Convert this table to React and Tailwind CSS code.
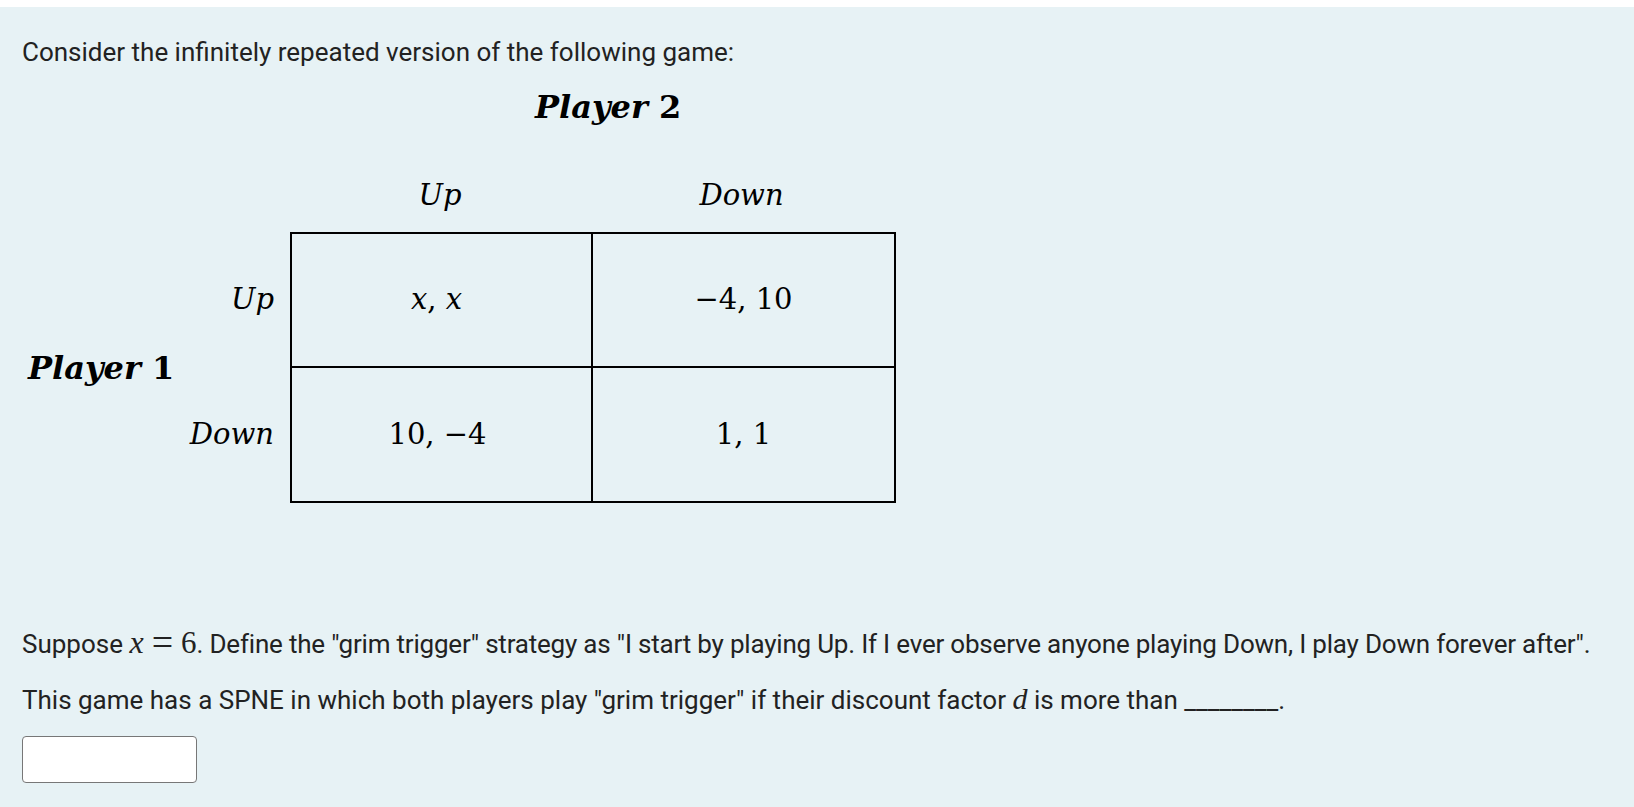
export default function App() {
  const serif = { fontFamily: '"DejaVu Serif", "Liberation Serif", serif' };
  const mj = { fontFamily: '"Liberation Serif", "DejaVu Serif", serif' };
  return (
    <div className="w-[1634px] h-[807px] bg-white pt-[7px]" style={{ fontFamily: 'Roboto, "Liberation Sans", sans-serif' }}>
      <div className="h-[800px] bg-[#e7f2f5] pl-[22px] text-[#222] text-[26px]">
        <div className="pt-[30px] h-[60px] leading-[30px]">Consider the infinitely repeated version of the following game:</div>

        <div className="mt-[20px] h-[40px] leading-[40px] pl-[513px] text-black text-[32px] font-bold italic" style={serif}>
          Player <span className="not-italic">2</span>
        </div>

        <div className="mt-[48px] h-[40px] leading-[40px] flex text-black text-[29px] italic" style={serif}>
          <div className="w-[268px]" />
          <div className="w-[300px] text-center">Up</div>
          <div className="w-[303px] text-center">Down</div>
        </div>

        <div className="mt-[17px] flex items-center text-black" style={serif}>
          <div className="w-[158px] pl-[6px] text-[32px] font-bold italic leading-[40px] whitespace-nowrap">
            Player <span className="not-italic">1</span>
          </div>
          <div className="w-[110px] pr-[16px] flex flex-col text-right text-[29px] italic">
            <div className="h-[135px] flex items-center justify-end">Up</div>
            <div className="h-[136px] flex items-center justify-end">Down</div>
          </div>
          <div className="w-[606px] h-[271px] border-2 border-black grid grid-cols-2 grid-rows-2 text-[29px]">
            <div className="border-r-2 border-b-2 border-black flex items-center justify-center pr-[10px]">
              <span className="italic">x</span>,&nbsp;<span className="italic">x</span>
            </div>
            <div className="border-b-2 border-black flex items-center justify-center">−4,&nbsp;10</div>
            <div className="border-r-2 border-black flex items-center justify-center pr-[8px]">10,&nbsp;−4</div>
            <div className="flex items-center justify-center">1,&nbsp;1</div>
          </div>
        </div>

        <div className="mt-[124px] h-[30px] leading-[30px] whitespace-nowrap">
          Suppose <span className="italic text-[32px]" style={mj}>x</span>
          <span className="inline-block text-[38px] leading-[0px] mx-[8px] align-[-2px]" style={mj}>=</span>
          <span className="text-[31px]" style={mj}>6</span>
          <span className="tracking-[-0.2px]">. Define the "grim trigger" strategy as "I start by playing Up. If I ever observe anyone playing Down, I play Down forever after".</span>
        </div>

        <div className="mt-[27px] h-[30px] leading-[30px] whitespace-nowrap">
          This game has a SPNE in which both players play "grim trigger" if their discount factor{' '}
          <span className="italic text-[30px]" style={mj}>d</span> is more than ________.
        </div>

        <input
          type="text"
          className="mt-[22px] block w-[175px] h-[47px] bg-white border border-[#777] rounded-[4px]"
        />
      </div>
    </div>
  );
}
